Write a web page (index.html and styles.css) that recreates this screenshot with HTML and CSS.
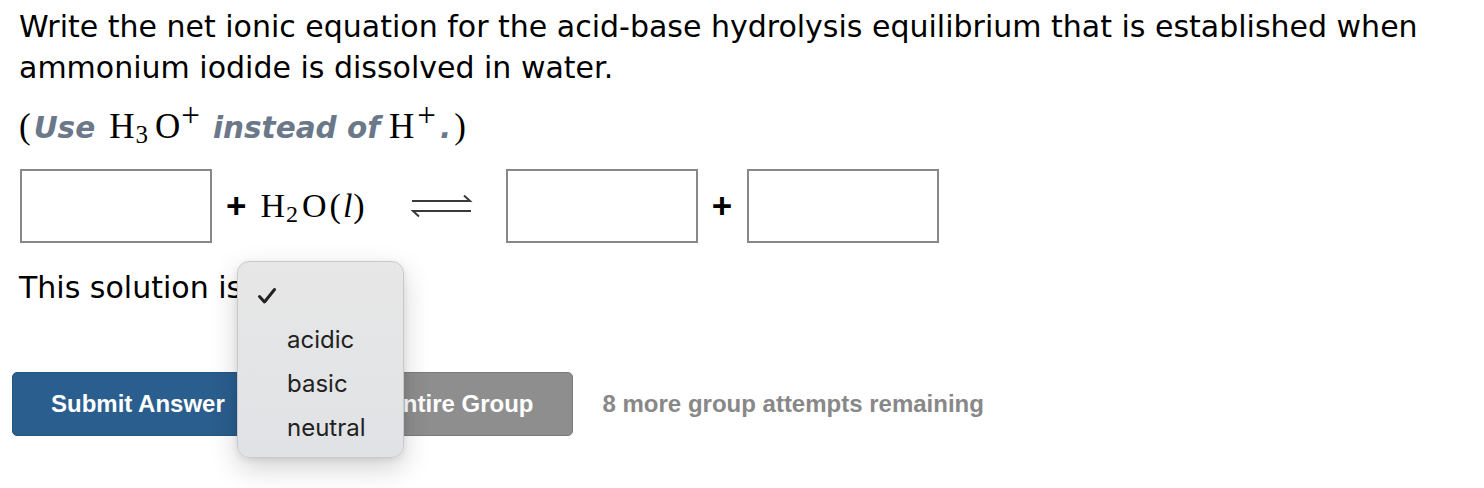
FILE: index.html
```html
<!DOCTYPE html>
<html>
<head>
<meta charset="utf-8">
<link rel="stylesheet" href="styles.css">
</head>
<body>
<div class="page">
  <p class="question">Write the net ionic equation for the acid-base hydrolysis equilibrium that is established when ammonium iodide is dissolved in water.</p>
  <p class="hint"><span class="paren">(</span><span class="em use">Use</span><span class="math m1">H<sub>3</sub>O<sup>+</sup></span><span class="em ins">instead of</span><span class="math m2">H<sup>+</sup></span><span class="em dot">.</span><span class="paren close">)</span></p>
  <div class="equation">
    <div class="box"></div>
    <span class="plus p1">+</span>
    <span class="math water">H<sub>2</sub>O<span class="lp">(</span><i>l</i>)</span>
    <svg class="arrow" width="62" height="24" viewBox="0 0 62 24">
      <path d="M1 7 H59 L53 1.5" fill="none" stroke="#3a3a3a" stroke-width="2"/>
      <path d="M60 17 H2 L8 22.5" fill="none" stroke="#3a3a3a" stroke-width="2"/>
    </svg>
    <div class="box"></div>
    <span class="plus p2">+</span>
    <div class="box"></div>
  </div>
  <p class="solution">This solution is</p>
  <div class="actions">
    <button class="btn primary">Submit Answer</button>
    <button class="btn secondary">Retry Entire Group</button>
    <span class="remaining">8 more group attempts remaining</span>
  </div>
</div>
<div class="menu">
  <div class="opt checked"><svg width="20" height="18" viewBox="0 0 20 18"><path d="M2.5 9.5 L7.5 15 L17.5 2.5" fill="none" stroke="#222" stroke-width="3" stroke-linecap="round" stroke-linejoin="round"/></svg></div>
  <div class="opt">acidic</div>
  <div class="opt">basic</div>
  <div class="opt">neutral</div>
</div>
</body>
</html>
```

FILE: styles.css
```css
html, body { margin: 0; padding: 0; background: #fff; }
body { width: 1484px; height: 488px; overflow: hidden; position: relative; }
.page { padding: 6px 0 0 19px; font-family: "DejaVu Sans", Verdana, sans-serif; color: #000; }
.question { margin: 0; font-size: 30px; line-height: 41px; width: 1425px; }
.hint { margin: 19px 0 0 0; font-size: 29.5px; line-height: 40px; display: flex; align-items: baseline; }
.paren { font-family: "Liberation Serif", serif; font-size: 35px; }
.em { font-style: italic; font-weight: bold; color: #6b7889; font-size: 29.5px; }
.use { margin-left: 3px; }
.ins { margin-left: 13px; }
.dot { margin-left: 4px; }
.close { margin-left: 3px; }
.math { font-family: "Liberation Serif", "DejaVu Serif", serif; font-size: 35px; }
.m1 { margin-left: 14px; }
.m2 { margin-left: 9px; }
.math sub { font-size: 25px; vertical-align: -5px; line-height: 0; margin: 0 7px 0 1px; }
.math sup { font-size: 33px; vertical-align: 12px; line-height: 0; margin-left: 1px; }
.m2 sup { margin-left: 3px; }
.equation { display: flex; align-items: center; margin-top: 21px; margin-left: 1px; height: 74px; }
.box { width: 188px; height: 70px; border: 2px solid #888; background: #fff; flex: none; }
.plus { font-family: "Liberation Sans", Arial, sans-serif; font-weight: bold; font-size: 35px; }
.p1 { margin-left: 14px; }
.p2 { margin-left: 14px; margin-right: 15px; }
.water { margin: 0 0 0 14px; font-size: 34px; }
.water sub { margin: 0 4px 0 1px; font-size: 24px; }
.water .lp { margin-left: 3px; }
.water i { font-style: italic; margin: 0 1px 0 2px; }
.arrow { margin: 0 33px 0 46px; flex: none; }
.solution { margin: 28px 0 0 0; font-size: 30px; line-height: 34px; }
.actions { display: flex; align-items: center; margin-top: 67px; margin-left: -7px; }
.btn { height: 64px; border-radius: 5px; font-family: "Liberation Sans", Arial, sans-serif; font-weight: bold; font-size: 24px; color: #fff; padding: 0 38px; border: 1px solid transparent; }
.primary { background: #2a5e8e; border-color: #245480; }
.secondary { background: #8e8e8e; border-color: #7d7d7d; margin-left: 16px; }
.remaining { margin-left: 30px; font-family: "Liberation Sans", Arial, sans-serif; font-weight: bold; font-size: 24px; color: #888; }
.menu { position: absolute; left: 237px; top: 261px; width: 167px; height: 197px; border: 1px solid #c9c9c9; border-radius: 12px; background: linear-gradient(#e7e7e7, #e0e2e5); box-shadow: 0 10px 28px rgba(0,0,0,0.18), 0 2px 6px rgba(0,0,0,0.08); font-family: Inter, "Noto Sans", sans-serif; font-size: 24px; color: #222; padding-top: 12px; box-sizing: border-box; }
.opt { height: 44px; line-height: 44px; padding-left: 49px; }
.checked { padding-left: 19px; display: flex; align-items: center; height: 44px; }
```
